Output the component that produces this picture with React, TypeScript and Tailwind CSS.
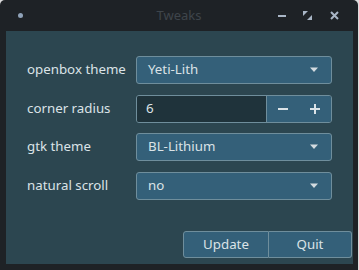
import React from "react";

const Arrow = () => (
  <svg width="10" height="6" viewBox="0 0 10 6" className="shrink-0">
    <path d="M1 0.5 L9 0.5 L5 5 Z" fill="#d3dbe0" />
  </svg>
);

function Combo({ value }: { value: string }) {
  return (
    <div className="w-[196px] h-[28px] flex items-center justify-between pl-[11px] pr-[12px] bg-[#346079] border border-[#6f8e9c] rounded-[3px] text-[#dbe3e7]">
      <span>{value}</span>
      <Arrow />
    </div>
  );
}

export default function App() {
  const font = { fontFamily: '"Noto Sans", "Open Sans", sans-serif' };
  return (
    <div className="w-[359px] h-[270px] bg-[#dcdcdc]" style={font}>
      <div className="w-[358px] h-[270px] bg-[#1e2226] rounded-t-[5px] flex flex-col">
        <div className="h-[31px] flex items-center relative px-[18px]">
          <div className="w-[5px] h-[5px] bg-[#8fa2b8] rounded-full" />
          <div className="absolute left-0 right-0 text-center text-[13px] text-[#3e454b] pointer-events-none">Tweaks</div>
          <div className="ml-auto flex items-center">
            <div className="w-[8px] h-[2px] bg-[#a9b6c6] mr-[17px]" />
            <svg width="9" height="9" viewBox="0 0 9 9" className="mr-[18px]">
              <path d="M0 0 L5 0 L0 5 Z" fill="#a9b6c6" />
              <path d="M9 9 L4 9 L9 4 Z" fill="#a9b6c6" />
            </svg>
            <svg width="9" height="9" viewBox="0 0 9 9" className="mr-[1px]">
              <path d="M1 1 L8 8 M8 1 L1 8" stroke="#a9b6c6" strokeWidth="2" />
            </svg>
          </div>
        </div>
        <div className="ml-[6px] w-[347px] h-[233px] bg-[#2c4650] flex flex-col pt-[25px] pl-[21px] text-[13.3px] text-[#dbe3e7]">
          <div className="flex flex-col">
            <div className="flex items-center h-[28px]">
              <div className="w-[109px]">openbox theme</div>
              <Combo value="Yeti-Lith" />
            </div>
            <div className="flex items-center h-[28px] mt-[11px]">
              <div className="w-[109px]">corner radius</div>
              <div className="w-[196px] h-[28px] flex border border-[#6f8e9c] rounded-[3px] overflow-hidden">
                <div className="w-[130px] bg-[#1f333b] flex items-center pl-[9px] border-r border-[#6f8e9c]">6</div>
                <div className="flex-1 bg-[#346079] flex items-center">
                  <div className="flex-1 flex justify-center">
                    <div className="w-[10px] h-[2px] bg-[#dbe3e7]" />
                  </div>
                  <div className="flex-1 flex justify-center">
                    <svg width="10" height="10" viewBox="0 0 10 10">
                      <path d="M0 5 H10 M5 0 V10" stroke="#dbe3e7" strokeWidth="2" />
                    </svg>
                  </div>
                </div>
              </div>
            </div>
            <div className="flex items-center h-[28px] mt-[10px]">
              <div className="w-[109px]">gtk theme</div>
              <Combo value="BL-Lithium" />
            </div>
            <div className="flex items-center h-[28px] mt-[11px]">
              <div className="w-[109px]">natural scroll</div>
              <Combo value="no" />
            </div>
          </div>
          <div className="mt-auto mb-[6px] flex justify-end pr-[1px]">
            <div className="w-[86px] h-[27px] bg-[#346079] border border-[#6f8e9c] rounded-l-[3px] flex items-center justify-center">Update</div>
            <div className="w-[83px] h-[27px] bg-[#346079] border border-l-0 border-[#6f8e9c] rounded-r-[3px] flex items-center justify-center">Quit</div>
          </div>
        </div>
      </div>
    </div>
  );
}
